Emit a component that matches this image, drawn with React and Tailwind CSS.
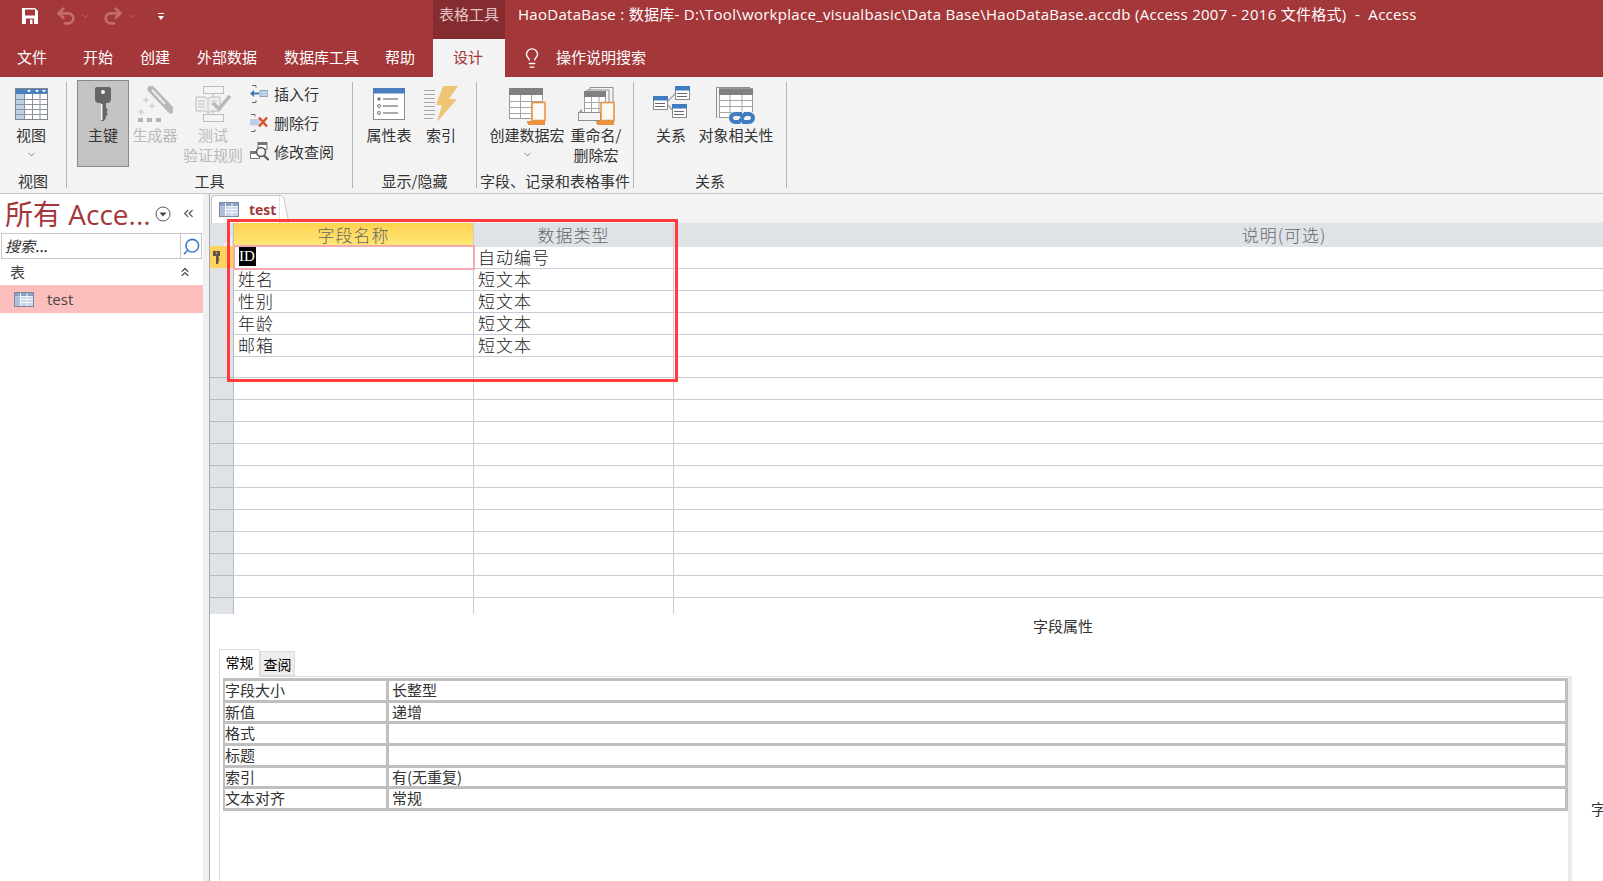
import React from 'react';
import { Undo2, Redo2, Lightbulb, ChevronDown, ChevronsLeft, ChevronsUp, Search } from 'lucide-react';

const SmallTable = ({ className }) => (
  <svg viewBox="0 0 20 15" className={className}>
    <rect x="0.5" y="0.5" width="19" height="14" fill="#c9d5e8" stroke="#7d8796" />
    <rect x="1" y="1" width="18" height="3" fill="#8aa2c6" />
    <path d="M1 4.5h18M1 7.5h18M1 10.5h18M6.5 1v13M13 1v13" stroke="#f4f6fa" strokeWidth="1" />
    <rect x="1" y="4" width="5" height="10" fill="#9fb4d2" opacity="0.7" />
  </svg>
);

const ViewIcon = () => (
  <svg viewBox="0 0 33 32" className="w-[33px] h-[32px]">
    <rect x="0.5" y="0.5" width="32" height="31" fill="#fff" stroke="#7f8791" />
    <rect x="1" y="1" width="31" height="5" fill="#4a7fbd" />
    <rect x="1" y="6" width="8" height="25" fill="#bdd1e6" />
    <path d="M12 2h4l-2 2.5zM20 2h4l-2 2.5zM27 2h4l-2 2.5z" fill="#fff" />
    <path d="M1 11.5h31M1 16.5h31M1 21.5h31M1 26.5h31M9.5 6v25M17.5 6v25M25 6v25" stroke="#8b9299" strokeWidth="1" />
  </svg>
);

const KeyIcon = () => (
  <svg viewBox="0 0 16 34" className="w-[16px] h-[34px]">
    <path d="M2 0h12a2 2 0 0 1 2 2v10a4 4 0 0 1-4 4h-1v5l2 2-1.500 2 1.500 2-2 2-0.500 3-2 2H6V16H4a4 4 0 0 1-4-4V2a2 2 0 0 1 2-2z" fill="#666" />
    <circle cx="8" cy="5" r="2" fill="#f4f4f4" />
    <path d="M6 17h1.500v16H6z" fill="#f4f4f4" />
  </svg>
);

const BuilderIcon = () => (
  <svg viewBox="0 0 36 36" className="w-[36px] h-[36px]">
    <path d="M14 3 L34 24" stroke="#b8b8b8" strokeWidth="7" strokeLinecap="round" />
    <path d="M15 4 L28 18" stroke="#eeeeee" strokeWidth="2" />
    <path d="M9 11v6M6 14h6M15 17v6M12 20h6M4 23v6M1 26h6" stroke="#c4c4c4" strokeWidth="1" />
    <path d="M1 32h5v4H1zM10 32h5v4h-5zM19 32h5v4h-5z" fill="#b4b4b4" />
  </svg>
);

const RuleIcon = () => (
  <svg viewBox="0 0 36 36" className="w-[36px] h-[36px]">
    <rect x="8.500" y="0.500" width="20" height="7" fill="#f4f4f4" stroke="#bdbdbd" />
    <rect x="8.500" y="28.500" width="20" height="7" fill="#f4f4f4" stroke="#bdbdbd" />
    <path d="M18 8v20" stroke="#bdbdbd" />
    <path d="M1 11h9l3 2 3-2h9v14h-9l-3 2-3-2H1z" fill="#efefef" stroke="#bdbdbd" />
    <path d="M3 15h7M3 18h7M3 21h7M16 15h6M16 18h6M13 13v13" stroke="#c4c4c4" />
    <path d="M18 17l6 6L35 10" fill="none" stroke="#b9b9b9" strokeWidth="3.500" />
  </svg>
);

const InsertRowIcon = () => (
  <svg viewBox="0 0 18 18" className="w-[18px] h-[18px]">
    <path d="M2 0.500h4M2 17.500h4M6 0.500v2M6 17.500v-2" stroke="#666" fill="none" />
    <rect x="10" y="5.500" width="8" height="6" fill="#bcd0e6" stroke="#8fa4bb" />
    <path d="M0 8.500l4-3.500v2.500h5v2H4v2.500z" fill="#3c78b5" />
  </svg>
);

const DeleteRowIcon = () => (
  <svg viewBox="0 0 19 18" className="w-[19px] h-[18px]">
    <path d="M1 0.500h4v2M1 17.500h4v-2" stroke="#666" fill="none" />
    <rect x="0" y="5" width="10" height="6.500" fill="#bcd0e6" />
    <path d="M9 3.500l8 9M17 3.500l-8 9" stroke="#d9532c" strokeWidth="2.500" />
  </svg>
);

const LookupIcon = () => (
  <svg viewBox="0 0 19 19" className="w-[19px] h-[19px]">
    <rect x="8" y="0.500" width="9" height="7" fill="#fff" stroke="#777" />
    <rect x="8" y="0.500" width="9" height="2.500" fill="#777" />
    <rect x="0.500" y="9.500" width="9" height="7" fill="#fff" stroke="#777" />
    <rect x="0.500" y="9.500" width="9" height="2.500" fill="#777" />
    <circle cx="11" cy="10" r="4.500" fill="#f3f3f3" stroke="#555" strokeWidth="1.500" />
    <path d="M14 13.500l4.500 4.500" stroke="#555" strokeWidth="2" />
  </svg>
);

const PropertyIcon = () => (
  <svg viewBox="0 0 32 32" className="w-[32px] h-[32px]">
    <rect x="0.500" y="0.500" width="31" height="31" fill="#fff" stroke="#8b8b8b" />
    <rect x="0" y="0" width="32" height="5.500" fill="#4a7fbd" />
    <circle cx="6" cy="11" r="1.700" fill="#777" />
    <circle cx="6" cy="18" r="1.500" fill="#fff" stroke="#777" />
    <circle cx="6" cy="25" r="1.500" fill="#fff" stroke="#777" />
    <path d="M10 11h15M10 18h15M10 25h15" stroke="#555" />
  </svg>
);

const IndexIcon = () => (
  <svg viewBox="0 0 34 36" className="w-[34px] h-[36px]">
    <path d="M0 4.500h11M0 8.500h11M0 12.500h11M0 16.500h11M0 20.500h11M0 24.500h11M0 28.500h11M0 32.500h9" stroke="#a8a8a8" />
    <path d="M19 0h15l-9 13h8L13 36l5-17h-6z" fill="#efc472" />
  </svg>
);

const Scroll = ({ x, y }) => (
  <g transform={`translate(${x} ${y})`}>
    <path d="M5 0.500h13v18H5z" fill="#fdf8f1" stroke="#e8913f" strokeWidth="1.500" />
    <path d="M0 19h15c1 0 2 0 3-2v6H2c-1 0-2-2-2-4z" fill="#e8913f" />
  </g>
);

const CreateMacroIcon = () => (
  <svg viewBox="0 0 37 37" className="w-[37px] h-[37px]">
    <rect x="0.500" y="0.500" width="33" height="30" fill="#fff" stroke="#9a9a9a" />
    <rect x="0" y="0" width="34" height="7" fill="#808080" />
    <path d="M0 13.500h34M0 19.500h34M0 25.500h34M11.500 7v24M22.500 7v24" stroke="#a6a6a6" />
    <Scroll x={18} y={14} />
  </svg>
);

const RenameMacroIcon = () => (
  <svg viewBox="0 0 37 38" className="w-[37px] h-[38px]">
    <path d="M9 20V3h22v22M12 3V0.500h23V22" fill="none" stroke="#8e8e8e" />
    <rect x="6.500" y="4.500" width="21" height="22" fill="#fff" stroke="#9a9a9a" />
    <rect x="6" y="4" width="22" height="6" fill="#808080" />
    <path d="M6 15.500h22M6 21.500h22M13.500 10v16M21 10v16" stroke="#a6a6a6" />
    <rect x="0.500" y="25.500" width="22" height="8" fill="#f4f4f4" stroke="#8e8e8e" />
    <path d="M1 25l3-3v3z" fill="#8e8e8e" />
    <Scroll x={18} y={15} />
  </svg>
);

const RelationIcon = () => (
  <svg viewBox="0 0 37 33" className="w-[37px] h-[33px]">
    <path d="M14 16L24 6M14 18l9 10" stroke="#a8a8a8" strokeWidth="1.500" />
    <rect x="0.500" y="10.500" width="14" height="13" fill="#fff" stroke="#8a8a8a" />
    <rect x="0" y="10" width="15" height="4.500" fill="#3f7cc0" />
    <path d="M2 17.500h10M2 20.500h10" stroke="#666" />
    <rect x="22.500" y="0.500" width="14" height="13" fill="#fff" stroke="#8a8a8a" />
    <rect x="22" y="0" width="15" height="4.500" fill="#3f7cc0" />
    <path d="M24 7.500h10M24 10.500h10" stroke="#666" />
    <rect x="19.500" y="18.500" width="14" height="13" fill="#fff" stroke="#8a8a8a" />
    <rect x="19" y="18" width="15" height="4.500" fill="#3f7cc0" />
    <path d="M21 25.500h10M21 28.500h10" stroke="#666" />
  </svg>
);

const DependencyIcon = () => (
  <svg viewBox="0 0 40 38" className="w-[40px] h-[38px]">
    <path d="M0.500 31V0.500H34" fill="none" stroke="#8e8e8e" />
    <rect x="3.500" y="1.500" width="33" height="29" fill="#fff" stroke="#9a9a9a" />
    <rect x="3" y="2" width="34" height="6" fill="#808080" />
    <path d="M3 13.500h34M3 19.500h34M3 25.500h34M14 8v23M26 8v23" stroke="#a6a6a6" />
    <rect x="13" y="24" width="27" height="14" rx="7" fill="#f3f3f3" />
    <path d="M26 27h-7a4 4 0 0 0 0 8h4l4-4M26 35h7a4 4 0 0 0 0-8h-4l-4 4" fill="none" stroke="#3f7cc0" strokeWidth="4" />
  </svg>
);

const GridRow = ({ name, type, first }) => (
  <div className="grid grid-cols-[24px_240px_200px_1220px] h-[22px] shrink-0">
    <div className={`border-r border-b border-[#b5bac4] flex items-center pl-[3px] ${first ? 'bg-[#ffd25e]' : 'bg-[#dfe2e7]'}`}>
      {first && (
        <svg viewBox="0 0 8 13" className="w-[8px] h-[13px]">
          <path d="M0 0h7v5H5.500v1l1 1-1 1 1 1-1 1v2l-1 1H3V5H0z" fill="#5d5644" />
          <circle cx="3.500" cy="2" r="0.800" fill="#ffd25e" />
        </svg>
      )}
    </div>
    <div className={`border-b border-r border-[#c9cdd8] pl-[4px] text-[17px] leading-[22px] tracking-[1px] font-light text-[#222] ${first ? 'outline-2 -outline-offset-1 outline-[#f6a9ae] relative' : ''}`}>
      {first ? (
        <span className="block bg-black text-white w-[17px] h-[20px] ml-[1px] leading-[21px] tracking-normal text-[15px] font-['Liberation_Serif',serif]">ID</span>
      ) : name}
    </div>
    <div className="border-b border-r border-[#c9cdd8] pl-[4px] text-[17px] leading-[22px] tracking-[1px] font-light text-[#222]">{type}</div>
    <div className="border-b border-[#c9cdd8]"></div>
  </div>
);

const LargeBtn = ({ icon, lines, width, iconTop, disabled, active, chevron }) => (
  <div className={`flex flex-col items-center mt-[3px] h-[87px] shrink-0 ${width} ${active ? 'bg-[#c3c3c3] border border-[#8a8a8a]' : ''}`}>
    <div className={`flex justify-center ${iconTop} ${active ? 'h-[44px]' : 'h-[45px]'}`}>{icon}</div>
    {lines.map((l) => (
      <div key={l} className={`leading-[20px] whitespace-nowrap ${disabled ? 'text-[#b9b9b9]' : 'text-[#333]'}`}>{l}</div>
    ))}
    {chevron && <ChevronDown className="w-[11px] h-[11px] mt-[4px] text-[#555]" strokeWidth={1.500} />}
  </div>
);

const SmallBtn = ({ icon, label }) => (
  <div className="flex items-center h-[29px] text-[#333] leading-none">
    <div className="w-[24px] flex items-center">{icon}</div>
    {label}
  </div>
);

const Group = ({ label, width, children }) => (
  <div className={`flex flex-col shrink-0 ${width}`}>
    <div className="flex h-[94px]">{children}</div>
    <div className="text-center leading-[20px] text-[#333] whitespace-nowrap">{label}</div>
  </div>
);

const Sep = () => <div className="w-px my-[5px] bg-[#b4b4b4] shrink-0"></div>;

const MenuItem = ({ label, width }) => (
  <div className={`flex items-center justify-center shrink-0 text-white pb-[2px] ${width}`}>{label}</div>
);

const props = [
  ['字段大小', '长整型'],
  ['新值', '递增'],
  ['格式', ''],
  ['标题', ''],
  ['索引', '有(无重复)'],
  ['文本对齐', '常规'],
];

const rows = [
  ['ID', '自动编号'],
  ['姓名', '短文本'],
  ['性别', '短文本'],
  ['年龄', '短文本'],
  ['邮箱', '短文本'],
];

export default function App() {
  return (
    <div className="relative w-[1603px] h-[881px] overflow-hidden bg-white flex flex-col text-[15px] font-['Noto_Sans_CJK_SC',sans-serif]">
      {/* Title bar */}
      <div className="flex h-[39px] bg-[#a4373a] shrink-0">
        <div className="flex items-center w-[433px] shrink-0 pl-[22px] pb-[7px]">
          <svg viewBox="0 0 16 16" className="w-[16px] h-[16px] shrink-0">
            <path d="M0 0h13l3 3v13H0z" fill="#fff" />
            <rect x="3" y="1.500" width="10" height="6" fill="#a4373a" />
            <rect x="4" y="10.500" width="8" height="5.500" fill="#a4373a" />
            <rect x="8" y="11.500" width="2.500" height="4.500" fill="#fff" />
          </svg>
          <Undo2 className="w-[22px] h-[22px] ml-[17px] text-[#c26c6e]" strokeWidth={3} />
          <ChevronDown className="w-[9px] h-[9px] ml-[4px] text-[#c26c6e]" strokeWidth={2.500} />
          <Redo2 className="w-[22px] h-[22px] ml-[12px] text-[#c26c6e]" strokeWidth={3} />
          <ChevronDown className="w-[9px] h-[9px] ml-[4px] text-[#c26c6e]" strokeWidth={2.500} />
          <svg viewBox="0 0 6 7" className="w-[6px] h-[7px] ml-[21px]">
            <path d="M0 0h6v1H0zM0 3h6L3 7z" fill="#fff" />
          </svg>
        </div>
        <div className="w-[72px] shrink-0 bg-[#842c30] text-[#e3c4c5] flex items-center justify-center pb-[10px]">表格工具</div>
        <div className="ml-[13px] text-white leading-[28px] whitespace-pre font-['Open_Sans','Noto_Sans_CJK_SC',sans-serif] text-[15px] tracking-[0.285px]">
          {'HaoDataBase : 数据库- D:\\Tool\\workplace_visualbasic\\Data Base\\HaoDataBase.accdb (Access 2007 - 2016 文件格式)  -  Access'}
        </div>
      </div>

      {/* Menu row */}
      <div className="flex h-[38px] bg-[#a4373a] shrink-0">
        <MenuItem label="文件" width="w-[64px]" />
        <MenuItem label="开始" width="w-[68px]" />
        <MenuItem label="创建" width="w-[46px]" />
        <MenuItem label="外部数据" width="w-[98px]" />
        <MenuItem label="数据库工具" width="w-[91px]" />
        <MenuItem label="帮助" width="w-[66px]" />
        <div className="w-[72px] shrink-0 bg-[#f3f3f3] text-[#a4373a] flex items-center justify-center pb-[2px] pr-[2px]">设计</div>
        <Lightbulb className="w-[22px] h-[24px] ml-[16px] self-center text-white" strokeWidth={1.500} />
        <div className="ml-[13px] self-center text-white pb-[2px]">操作说明搜索</div>
      </div>

      {/* Ribbon */}
      <div className="flex h-[117px] bg-[#f3f3f3] border-b border-[#c6c6c6] shrink-0">
        <Group label="视图" width="w-[66px]">
          <LargeBtn icon={<ViewIcon />} lines={['视图']} width="w-[62px]" iconTop="pt-[8px]" chevron />
        </Group>
        <Sep />
        <Group label="工具" width="w-[285px]">
          <div className="w-[10px] shrink-0"></div>
          <LargeBtn icon={<KeyIcon />} lines={['主键']} width="w-[52px]" iconTop="pt-[6px]" active />
          <LargeBtn icon={<BuilderIcon />} lines={['生成器']} width="w-[52px]" iconTop="pt-[6px]" disabled />
          <LargeBtn icon={<RuleIcon />} lines={['测试', '验证规则']} width="w-[64px]" iconTop="pt-[6px]" disabled />
          <div className="flex flex-col ml-[5px] pt-[2px]">
            <SmallBtn icon={<InsertRowIcon />} label="插入行" />
            <SmallBtn icon={<DeleteRowIcon />} label="删除行" />
            <SmallBtn icon={<LookupIcon />} label="修改查阅" />
          </div>
        </Group>
        <Sep />
        <Group label="显示/隐藏" width="w-[123px]">
          <div className="w-[14px] shrink-0"></div>
          <LargeBtn icon={<PropertyIcon />} lines={['属性表']} width="w-[44px]" iconTop="pt-[8px]" />
          <LargeBtn icon={<IndexIcon />} lines={['索引']} width="w-[60px]" iconTop="pt-[6px]" />
        </Group>
        <Sep />
        <Group label="字段、记录和表格事件" width="w-[156px]">
          <div className="w-[12px] shrink-0"></div>
          <LargeBtn icon={<CreateMacroIcon />} lines={['创建数据宏']} width="w-[76px]" iconTop="pt-[8px]" chevron />
          <LargeBtn icon={<RenameMacroIcon />} lines={['重命名/', '删除宏']} width="w-[62px]" iconTop="pt-[7px]" />
        </Group>
        <Sep />
        <Group label="关系" width="w-[152px]">
          <div className="w-[17px] shrink-0"></div>
          <LargeBtn icon={<RelationIcon />} lines={['关系']} width="w-[40px]" iconTop="pt-[6px]" />
          <div className="w-[7px] shrink-0"></div>
          <LargeBtn icon={<DependencyIcon />} lines={['对象相关性']} width="w-[76px]" iconTop="pt-[7px]" />
        </Group>
        <Sep />
      </div>

      {/* Body */}
      <div className="flex flex-1 min-h-0">
        {/* Navigation pane */}
        <div className="w-[203px] shrink-0 flex flex-col bg-white">
          <div className="flex items-center h-[39px] pl-[5px] shrink-0">
            <span className="text-[28px] text-[#a4373a] whitespace-nowrap font-['Open_Sans','Noto_Sans_CJK_SC',sans-serif] w-[149px]">所有 Acce...</span>
            <svg viewBox="0 0 16 16" className="w-[16px] h-[16px] ml-[1px] shrink-0">
              <circle cx="8" cy="8" r="7" fill="none" stroke="#555" />
              <path d="M4.500 6.500h7L8 10.500z" fill="#444" />
            </svg>
            <ChevronsLeft className="w-[15px] h-[15px] ml-[10px] text-[#555] shrink-0" strokeWidth={2} />
          </div>
          <div className="flex h-[26px] ml-[1px] mr-[1px] border border-[#c6c6c6] shrink-0">
            <div className="flex-1 pl-[3px] italic text-[15px] leading-[24px] text-[#333]">搜索...</div>
            <div className="w-[21px] border-l border-[#c6c6c6] flex items-center justify-center">
              <Search className="w-[19px] h-[19px] -scale-x-100 text-[#3f7cc0]" strokeWidth={2} />
            </div>
          </div>
          <div className="flex items-center justify-between h-[26px] pl-[10px] pr-[11px] text-[#444] shrink-0">
            <span>表</span>
            <ChevronsUp className="w-[14px] h-[14px] text-[#444]" strokeWidth={2} />
          </div>
          <div className="flex items-center h-[28px] bg-[#fdbebe] pl-[14px] shrink-0">
            <SmallTable className="w-[20px] h-[15px]" />
            <span className="ml-[13px] text-[#444] font-['Open_Sans',sans-serif]">test</span>
          </div>
        </div>
        <div className="w-[7px] shrink-0 bg-[#f0f0f0] border-r border-[#a8a8a8]"></div>

        {/* Main area */}
        <div className="flex-1 min-w-0 flex flex-col">
          {/* Document tab strip */}
          <div className="flex h-[29px] bg-[#f3f3f3] shrink-0 pl-[1px] pt-[1px]">
            <div className="flex items-center w-[68px] h-[28px] bg-white border-t border-l border-[#c6c6c6] rounded-tl-[4px] pl-[7px]">
              <SmallTable className="w-[20px] h-[15px] shrink-0" />
              <span className="ml-[10px] text-[14px] font-bold text-[#a4373a] font-['Open_Sans',sans-serif]">test</span>
            </div>
            <svg viewBox="0 0 10 28" className="w-[10px] h-[28px]">
              <path d="M0 0.500h1c2 0 3 1 4 4l5 23.500H0z" fill="#fff" stroke="#c6c6c6" />
            </svg>
          </div>

          {/* Design grid */}
          <div className="h-[391px] overflow-hidden flex flex-col shrink-0">
            <div className="grid grid-cols-[24px_240px_200px_1220px] h-[23px] shrink-0 text-[17px] tracking-[1px] font-light text-[#666] leading-[24px] text-center">
              <div className="bg-[#dfe2e7] border-r border-[#b5bac4] flex items-end justify-end">
                <svg viewBox="0 0 12 12" className="w-[12px] h-[12px]">
                  <path d="M11 1v10H1z" fill="#eef0f3" />
                </svg>
              </div>
              <div className="bg-gradient-to-b from-[#ffd24f] to-[#ffe878] border-r border-[#c9cdd8]">字段名称</div>
              <div className="bg-[#dfe2e7] border-r border-[#c9cdd8]">数据类型</div>
              <div className="bg-[#dfe2e7]">说明(可选)</div>
            </div>
            {rows.map((r, i) => (
              <GridRow key={r[0]} name={r[0]} type={r[1]} first={i === 0} />
            ))}
            {Array.from({ length: 12 }).map((_, i) => (
              <GridRow key={i} name="" type="" />
            ))}
          </div>

          {/* Field properties */}
          <div className="h-[35px] pl-[823px] text-[15px] leading-[24px] text-[#333] shrink-0">字段属性</div>
          <div className="flex flex-1 min-h-0">
            <div className="w-[1353px] ml-[9px] flex flex-col shrink-0">
              <div className="flex items-end h-[27px] shrink-0">
                <div className="w-[41px] h-[28px] bg-white border-t border-l border-r border-[#dcdcdc] text-black text-center text-[14px] leading-[24px] -mb-px relative">常规</div>
                <div className="w-[35px] h-[25px] bg-[#ededed] border border-[#dcdcdc] text-black text-center text-[14px] leading-[24px]">查阅</div>
              </div>
              <div className="flex-1 border-t border-l border-[#dcdcdc] border-r-[4px] border-r-[#ececec] pt-[1px] pl-[3px]">
                <div className="border-b-[3px] border-l-[2px] border-r-[3px] border-[#bfbfbf]">
                  {props.map((p) => (
                    <div key={p[0]} className="flex h-[21.670px] border-t-[3px] border-[#bfbfbf] text-[#333] text-[15px] leading-[18px]">
                      <div className="w-[164px] border-r-[3px] border-[#bfbfbf] shrink-0">{p[0]}</div>
                      <div className="pl-[3px]">{p[1]}</div>
                    </div>
                  ))}
                </div>
              </div>
            </div>
            <div className="pl-[19px] pt-[149px] text-[#333] whitespace-nowrap">字</div>
          </div>
        </div>
      </div>

      {/* Red annotation box */}
      <div className="absolute left-[227px] top-[219px] w-[451px] h-[163px] border-[3px] border-[#ff3b3b]"></div>
    </div>
  );
}
